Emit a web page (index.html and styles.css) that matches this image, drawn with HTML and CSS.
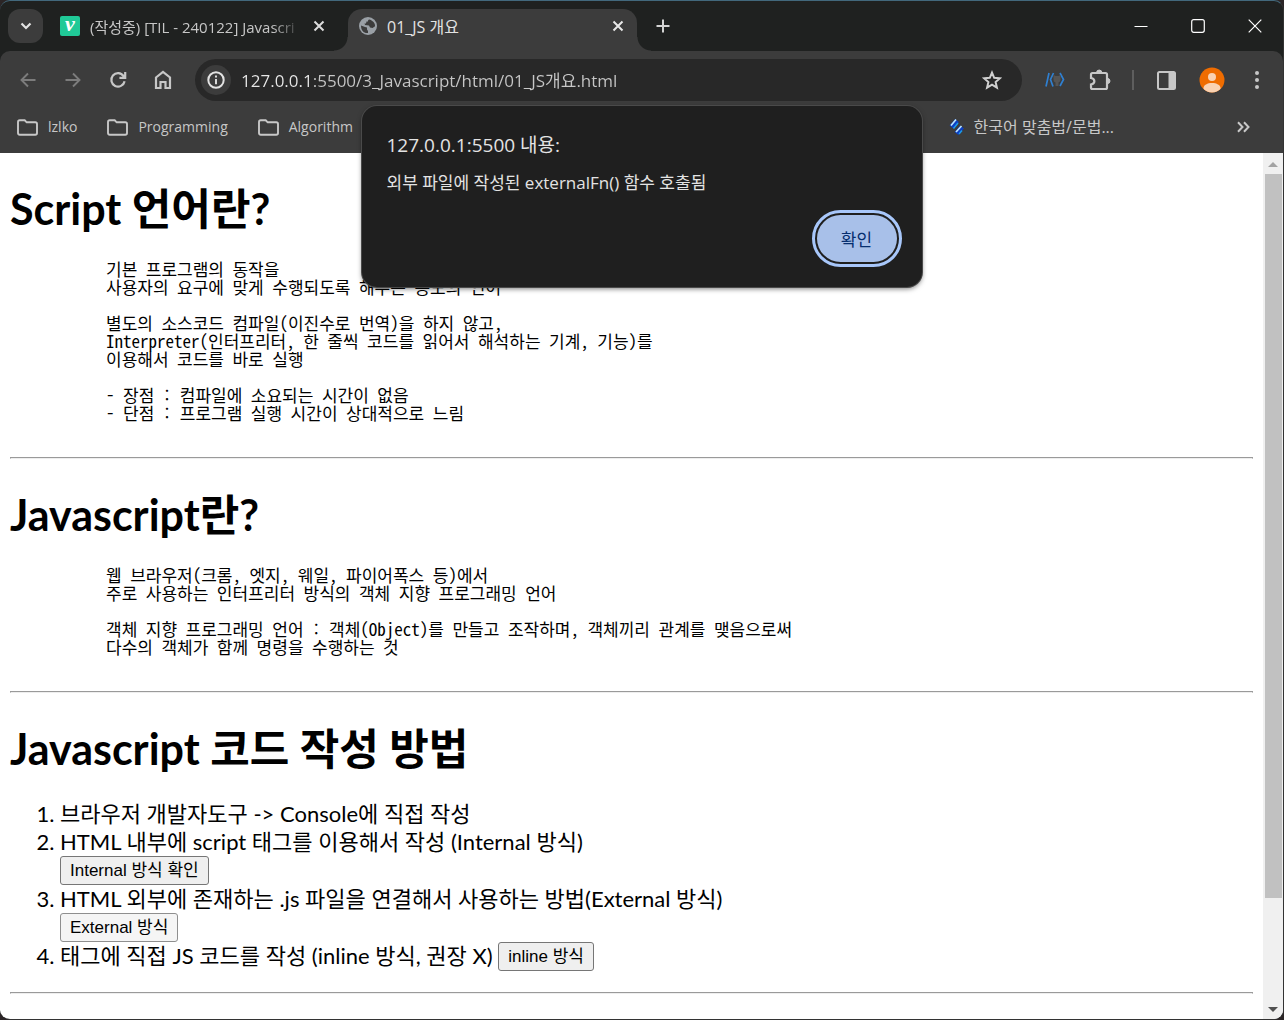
FILE: index.html
```html
<!DOCTYPE html>
<html lang="ko">
<head>
<meta charset="utf-8">
<title>01_JS 개요</title>
<link rel="stylesheet" href="styles.css">
</head>
<body>
<div class="window">
  <header class="tabstrip">
    <button class="tab-search" aria-label="탭 검색"><svg width="12" height="8" viewBox="0 0 12 8"><path d="M1.5 1.5 6 6l4.500-4.500" fill="none" stroke="#e3e3e3" stroke-width="2.200"/></svg></button>
    <div class="tab">
      <span class="favicon-v">v</span>
      <button class="tab-title faded">(작성중) [TIL - 240122] Javascri</button>
      <button class="icon-btn close" aria-label="탭 닫기"><svg width="12" height="12" viewBox="0 0 12 12"><path d="M1.500 1.500l9 9M10.500 1.500l-9 9" stroke="#dcdcdc" stroke-width="2"/></svg></button>
    </div>
    <div class="tab active">
      <svg width="18" height="18" viewBox="0 0 18 18"><circle cx="9" cy="9" r="9" fill="#9aa0a6"/><path d="M2 8.500 6 10l2 .5v2l1 1.500v2C5 16.500 2 13.500 2 8.500zM10.500 2.500c-1.500 0-1.500 1-1.500 2H7.500l-.5 2H5.500l.5 1.500 4 .5 1 2 2.500.5c1 0 1-1.500 2.500-1.500.5-3.500-2-5.500-5.500-7z" fill="#3c3c3c"/></svg>
      <button class="tab-title">01_JS 개요</button>
      <button class="icon-btn close" aria-label="탭 닫기"><svg width="12" height="12" viewBox="0 0 12 12"><path d="M1.500 1.500l9 9M10.500 1.500l-9 9" stroke="#e8e8e8" stroke-width="2"/></svg></button>
    </div>
    <button class="icon-btn new-tab" aria-label="새 탭"><svg width="14" height="14" viewBox="0 0 14 14"><path d="M7 .5v13M.5 7h13" stroke="#d4d4d4" stroke-width="2"/></svg></button>
    <div class="window-controls">
      <button aria-label="최소화"><svg width="14" height="14" viewBox="0 0 14 14"><path d="M.5 7.500h13" stroke="#fff"/></svg></button>
      <button aria-label="최대화"><svg width="14" height="14" viewBox="0 0 14 14"><rect x=".7" y=".7" width="12.600" height="12.600" rx="2" fill="none" stroke="#fff" stroke-width="1.200"/></svg></button>
      <button aria-label="닫기"><svg width="14" height="14" viewBox="0 0 14 14"><path d="M.7.7l12.600 12.600M13.300.7.7 13.300" stroke="#fff" stroke-width="1.200"/></svg></button>
    </div>
  </header>

  <div class="chrome">
    <nav class="toolbar">
      <button class="icon-btn" aria-label="뒤로"><svg width="16" height="16" viewBox="0 0 16 16"><path d="M15.500 8H2M8 1.500 1.500 8 8 14.500" fill="none" stroke="#7c7c7c" stroke-width="1.900"/></svg></button>
      <button class="icon-btn" aria-label="앞으로"><svg width="16" height="16" viewBox="0 0 16 16"><path d="M.5 8H14M8 1.500 14.500 8 8 14.500" fill="none" stroke="#7c7c7c" stroke-width="1.900"/></svg></button>
      <button class="icon-btn" aria-label="새로고침"><svg width="18" height="18" viewBox="0 0 18 18"><path d="M15.600 10.200A6.700 6.700 0 1 1 14.500 5L16 6.500M16.200 1v5.800h-5.800" fill="none" stroke="#c7c7c7" stroke-width="2.200"/></svg></button>
      <button class="icon-btn" aria-label="홈"><svg width="18" height="20" viewBox="0 0 18 20"><path d="M2 7.500 9 2l7 5.500V18h-4.500v-6h-5v6H2z" fill="none" stroke="#c7c7c7" stroke-width="2.200"/></svg></button>
      <div class="omnibox">
        <button class="site-info" aria-label="사이트 정보 보기"><svg width="18" height="18" viewBox="0 0 18 18"><circle cx="9" cy="9" r="7.700" fill="none" stroke="#e3e3e3" stroke-width="2"/><path d="M9 8v5.200M9 4.600v2" stroke="#e3e3e3" stroke-width="1.900"/></svg></button>
        <input class="url" type="text" aria-label="주소창" value="127.0.0.1:5500/3_Javascript/html/01_JS개요.html">
        <button class="icon-btn star" aria-label="북마크에 추가"><svg width="20" height="20" viewBox="0 0 20 20"><path d="M10 2.600l2.200 5.200 5.700.5-4.300 3.700 1.300 5.600L10 14.600l-4.900 3 1.300-5.600L2.100 8.300l5.700-.5z" fill="none" stroke="#d0d0d0" stroke-width="2"/></svg></button>
      </div>
      <button class="icon-btn" aria-label="확장 프로그램"><svg width="20" height="16" viewBox="0 0 20 16"><path d="M4 1 1 14.500M8.500 1 5.500 7.500l2.500 7M15 1l3.500 6.500L15 14" fill="none" stroke="#2f7fd0" stroke-width="1.700"/><path d="M8.500 3l2 1h3l2-1v4.500c0 2-1 2.500-2 3V14h-3v-3.500c-1.500-.5-2-1.500-2-3z" fill="#555"/></svg></button>
      <button class="icon-btn" aria-label="확장 프로그램 메뉴"><svg width="22" height="22" viewBox="0 0 22 22"><path d="M2 5.500c0-1 .5-1.500 1.500-1.500h13c1 0 1.500.5 1.500 1.500v13c0 1-.5 1.500-1.500 1.500h-13C2.500 20 2 19.500 2 18.500v-3c4.500-1 4.500-5.500 0-6.500z" fill="none" stroke="#c7c7c7" stroke-width="2.200"/><path d="M7.500 4a2.700 3 0 0 1 5.400 0zM18 9.300a3 2.700 0 0 1 0 5.400z" fill="#c7c7c7" stroke="#c7c7c7"/></svg></button>
      <span class="divider"></span>
      <button class="icon-btn" aria-label="측면 패널"><svg width="19" height="19" viewBox="0 0 19 19"><rect x="1" y="1" width="17" height="17" rx="1.500" fill="none" stroke="#c7c7c7" stroke-width="2"/><path d="M11.500 1H18v17h-6.500z" fill="#c7c7c7"/></svg></button>
      <button class="icon-btn" aria-label="프로필"><svg width="26" height="26" viewBox="0 0 26 26"><defs><clipPath id="disc"><circle cx="13" cy="13" r="12.500"/></clipPath></defs><g clip-path="url(#disc)"><path d="M0 0h26v26H0z" fill="#ef6c00"/><circle cx="13" cy="10" r="4" fill="#fad2b2"/><path d="M4.500 26v-5c0-3 4-5 8.500-5s8.500 2 8.500 5v5z" fill="#fad2b2"/></g></svg></button>
      <button class="icon-btn" aria-label="메뉴"><svg width="4" height="18" viewBox="0 0 4 18"><g fill="#c7c7c7"><circle cx="2" cy="2" r="2"/><circle cx="2" cy="9" r="2"/><circle cx="2" cy="16" r="2"/></g></svg></button>
    </nav>
    <nav class="bookmarks">
      <a href="#"><svg width="21" height="17" viewBox="0 0 21 17"><path d="M1 3c0-1 .6-1.700 1.700-1.700h5l2 2h8.600c1 0 1.700.7 1.700 1.700v9c0 1-.7 1.700-1.700 1.700H2.700C1.600 15.700 1 15 1 14z" fill="none" stroke="#c7c7c7" stroke-width="1.900"/></svg>lzlko</a>
      <a href="#"><svg width="21" height="17" viewBox="0 0 21 17"><path d="M1 3c0-1 .6-1.700 1.700-1.700h5l2 2h8.600c1 0 1.700.7 1.700 1.700v9c0 1-.7 1.700-1.700 1.700H2.700C1.600 15.700 1 15 1 14z" fill="none" stroke="#c7c7c7" stroke-width="1.900"/></svg>Programming</a>
      <a href="#"><svg width="21" height="17" viewBox="0 0 21 17"><path d="M1 3c0-1 .6-1.700 1.700-1.700h5l2 2h8.600c1 0 1.700.7 1.700 1.700v9c0 1-.7 1.700-1.700 1.700H2.700C1.600 15.700 1 15 1 14z" fill="none" stroke="#c7c7c7" stroke-width="1.900"/></svg>Algorithm</a>
      <a class="last" href="#"><svg width="15" height="18" viewBox="0 0 15 18"><path d="M2.500 9 8 2.500M7.500 15.500 13 9" stroke="#0b3fc4" stroke-width="5"/><path d="M2 7.500 7 1.500M7 14l5.500-6" stroke="#bfe6fb" stroke-width="1.600"/><path d="M4.500 10.500 9 5M10 16l3-3.500" stroke="#1b9ae8" stroke-width="1.500"/></svg>한국어 맞춤법/문법...</a>
      <button class="more" aria-label="숨겨진 북마크"><svg width="13" height="12" viewBox="0 0 13 12"><path d="M1 1.200 5.500 6 1 10.800M7 1.200 11.500 6 7 10.800" fill="none" stroke="#c7c7c7" stroke-width="2"/></svg></button>
    </nav>
  </div>

  <div class="viewport">
    <main class="page">
      <h1>Script 언어란?</h1>
      <pre>
기본 프로그램의 동작을
사용자의 요구에 맞게 수행되도록 해주는 용도의 언어

별도의 소스코드 컴파일(이진수로 번역)을 하지 않고,
Interpreter(인터프리터, 한 줄씩 코드를 읽어서 해석하는 기계, 기능)를
이용해서 코드를 바로 실행

- 장점 : 컴파일에 소요되는 시간이 없음
- 단점 : 프로그램 실행 시간이 상대적으로 느림
</pre>
      <hr>
      <h1>Javascript란?</h1>
      <pre>
웹 브라우저(크롬, 엣지, 웨일, 파이어폭스 등)에서
주로 사용하는 인터프리터 방식의 객체 지향 프로그래밍 언어

객체 지향 프로그래밍 언어 : 객체(Object)를 만들고 조작하며, 객체끼리 관계를 맺음으로써
다수의 객체가 함께 명령을 수행하는 것
</pre>
      <hr>
      <h1>Javascript 코드 작성 방법</h1>
      <ol>
        <li>브라우저 개발자도구 -&gt; Console에 직접 작성</li>
        <li>HTML 내부에 script 태그를 이용해서 작성 (Internal 방식)<br>
          <button class="demo">Internal 방식 확인</button></li>
        <li>HTML 외부에 존재하는 .js 파일을 연결해서 사용하는 방법(External 방식)<br>
          <button class="demo hover">External 방식</button></li>
        <li>태그에 직접 JS 코드를 작성 (inline 방식, 권장 X) <button class="demo">inline 방식</button></li>
      </ol>
      <hr>
    </main>
    <div class="scrollbar">
      <svg width="10" height="21" viewBox="0 0 10 21"><path d="M0 14l5-5 5 5z" fill="#a3a3a3"/></svg>
      <div class="thumb"></div>
      <div class="track"></div>
      <svg width="10" height="21" viewBox="0 0 10 21"><path d="M0 9l5 5 5-5z" fill="#505050"/></svg>
    </div>
  </div>

  <div class="dialog" role="alertdialog" aria-labelledby="dialog-title">
    <h2 id="dialog-title">127.0.0.1:5500 내용:</h2>
    <p>외부 파일에 작성된 externalFn() 함수 호출됨</p>
    <button class="confirm">확인</button>
  </div>
</div>
</body>
</html>
```
FILE: styles.css
```css
* { box-sizing: border-box; }

body {
  margin: 0;
  background: #2b2526;
  font-family: "Open Sans", "Noto Sans CJK KR", sans-serif;
}

button {
  border: 0;
  padding: 0;
  background: none;
  font-family: inherit;
}

svg { display: block; flex: none; }

.window {
  position: relative;
  display: flex;
  flex-direction: column;
  min-height: 100vh;
  border: solid #333;
  border-width: 1px 1px 1px 0;
  border-top-color: #42687c;
  border-radius: 10px;
  background: #1f2120;
  overflow: hidden;
}

/* Tab strip */
.tabstrip {
  display: flex;
  height: 50px;
  padding-left: 8px;
}

.tab-search {
  display: flex;
  align-items: center;
  justify-content: center;
  width: 35px;
  height: 34px;
  margin-top: 8px;
  border-radius: 12px;
  background: #3c3c3c;
}

.tab {
  position: relative;
  display: flex;
  align-items: center;
  width: 289px;
  margin-top: 8px;
  padding: 0 12px 8px 11px;
  gap: 10px;
}

.tab:not(.active) { margin-left: 6px; margin-right: 10px; }

.tab.active {
  border-radius: 14px 14px 0 0;
  background: #3c3c3c;
}

.tab.active::before,
.tab.active::after {
  content: "";
  position: absolute;
  bottom: 0;
  width: 14px;
  height: 14px;
}

.tab.active::before {
  right: 100%;
  background: radial-gradient(circle at 0 0, transparent 13px, #3c3c3c 14px);
}

.tab.active::after {
  left: 100%;
  background: radial-gradient(circle at 100% 0, transparent 13px, #3c3c3c 14px);
}

.tab-title {
  flex: 1;
  min-width: 0;
  padding-top: 2px;
  color: #e3e3e3;
  font-size: 16px;
  line-height: 24px;
  text-align: left;
  white-space: nowrap;
}

.tab-title.faded {
  color: #c7c7c7;
  font-size: 15px;
  mask-image: linear-gradient(to left, transparent, #000 30px);
}

.favicon-v {
  flex: none;
  width: 20px;
  height: 20px;
  border-radius: 2px;
  background: #20c997;
  color: #fff;
  font: italic bold 22px/16px "Liberation Serif", serif;
  text-align: center;
}

.icon-btn {
  display: flex;
  flex: none;
  align-items: center;
  justify-content: center;
  width: 45px;
  height: 42px;
}

.icon-btn.close { width: 14px; }

.new-tab { height: 50px; margin-left: 3px; }

.window-controls {
  display: flex;
  margin-left: auto;
}

.window-controls button {
  display: flex;
  align-items: center;
  justify-content: center;
  width: 57px;
}

/* Toolbar and bookmarks */
.chrome {
  border-radius: 10px 10px 0 0;
  background: #3c3c3c;
}

.toolbar {
  display: flex;
  align-items: center;
  padding: 8px 4px 0 5px;
}

.omnibox {
  display: flex;
  flex: 1;
  align-items: center;
  height: 42px;
  margin: 0 10px;
  padding: 0 8px 0 6px;
  border-radius: 21px;
  background: #282828;
}

.site-info {
  display: flex;
  align-items: center;
  justify-content: center;
  width: 30px;
  height: 30px;
  border-radius: 15px;
  background: #3c3c3c;
}

.url {
  flex: 1;
  min-width: 0;
  height: 30px;
  margin-left: 10px;
  padding: 0 0 2px;
  border: 0;
  outline: 0;
  background: linear-gradient(to right, #e8e8e8 70px, #c7c7c7 70px);
  background-clip: text;
  color: transparent;
  font-family: inherit;
  font-size: 17px;
}

.star { width: 44px; }

.divider {
  width: 2px;
  height: 20px;
  margin: 0 10px;
  background: #5e5e5e;
}

.bookmarks {
  display: flex;
  align-items: center;
  gap: 30px;
  height: 52px;
  padding: 0 33px 0 17px;
}

.bookmarks a {
  display: flex;
  align-items: center;
  gap: 10px;
  color: #c7c7c7;
  font-size: 14px;
  line-height: 24px;
  text-decoration: none;
  white-space: nowrap;
}

.bookmarks .last {
  margin-left: auto;
  font-size: 16px;
}

.more { margin-left: 93px; }

/* Page */
.viewport {
  display: flex;
  flex: 1;
  background: #fff;
}

.page {
  flex: 1;
  padding: 0 10px;
  font-family: Lato, "Noto Sans CJK KR", sans-serif;
  font-size: 22px;
  line-height: 28px;
}

.page h1 {
  margin: 29px 0 25px;
  font-size: 43px;
  font-weight: 700;
  line-height: 53px;
}

.page pre {
  margin: 0 0 35px;
  padding-left: 96px;
  font-family: "Noto Sans Mono CJK KR", "Noto Sans CJK KR", monospace;
  font-size: 17px;
  line-height: 18px;
}

.page hr {
  height: 2px;
  margin: 0;
  border: 1px solid #9a9a9a;
  border-bottom-color: #eee;
}

.page ol {
  margin: 0 0 21px;
  padding-left: 50px;
}

.demo {
  height: 29px;
  padding: 0 9px;
  border: 1px solid #767676;
  border-radius: 3px;
  background: #efefef;
  color: #000;
  font-family: "Liberation Sans", "Noto Sans CJK KR", sans-serif;
  font-size: 17px;
  line-height: 26px;
  vertical-align: top;
}

.demo.hover { border-color: #8f8f8f; background: #f5f5f5; }

.scrollbar {
  display: flex;
  flex-direction: column;
  align-items: center;
  width: 20px;
  background: #f0f0f0;
}

.thumb {
  flex: 724;
  width: 17px;
  background: #c1c1c1;
}

.track { flex: 100; }

/* Alert */
.dialog {
  position: absolute;
  top: 105px;
  left: 50%;
  display: flex;
  flex-direction: column;
  width: 560px;
  margin-left: -280px;
  padding: 25px;
  border-radius: 15px;
  background: #1f1f1f;
  box-shadow: 0 0 0 1px #4a4a4a, 0 2px 5px rgba(0, 0, 0, 0.5);
  color: #e3e3e3;
}

.dialog h2 {
  margin: 0;
  font-size: 19px;
  font-weight: 400;
  line-height: 28px;
}

.dialog p {
  margin: 12px 0 20px;
  font-size: 17px;
  line-height: 24px;
}

.confirm {
  align-self: flex-end;
  width: 80px;
  height: 47px;
  border-radius: 24px;
  outline: 3px solid #a8c7fa;
  outline-offset: 2px;
  background: #a8c0e9;
  color: #062e6f;
  font-size: 17px;
}
```
